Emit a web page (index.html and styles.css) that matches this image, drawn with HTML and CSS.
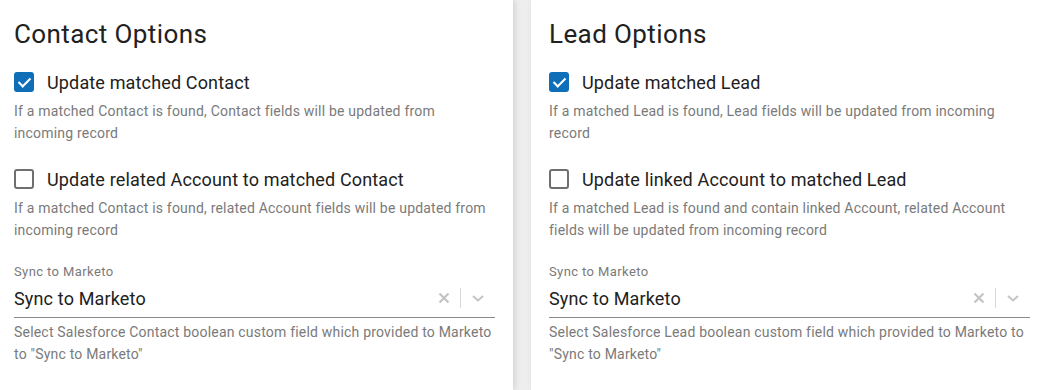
FILE: index.html
```html
<!DOCTYPE html>
<html>
<head>
    <title>Sync Options</title>
    <link rel="stylesheet" href="styles.css">
</head>
<body>
    <div class="page">
        <!-- Contact options card -->
        <div class="card card-left">
            <h2 class="card-title">Contact Options</h2>

            <div class="option">
                <label class="check-row">
                    <span class="box checked"></span>
                    <span class="check-label">Update matched Contact</span>
                </label>
                <p class="hint">If a matched Contact is found, Contact fields will be updated from incoming record</p>
            </div>

            <div class="option">
                <label class="check-row">
                    <span class="box"></span>
                    <span class="check-label">Update related Account to matched Contact</span>
                </label>
                <p class="hint">If a matched Contact is found, related Account fields will be updated from incoming record</p>
            </div>

            <div class="field">
                <div class="field-label">Sync to Marketo</div>
                <div class="select">
                    <span class="select-value">Sync to Marketo</span>
                    <span class="select-icons">
                        <svg class="icon-clear" width="12" height="12" viewBox="0 0 12 12"><path d="M1.5 1.5 L10.5 10.5 M10.5 1.5 L1.5 10.5" stroke="#c4c4c4" stroke-width="2.2"/></svg>
                        <span class="sep"></span>
                        <svg class="icon-chevron" width="14" height="10" viewBox="0 0 14 10"><path d="M2 3 L7 7.5 L12 3" fill="none" stroke="#c4c4c4" stroke-width="2"/></svg>
                    </span>
                </div>
                <p class="hint">Select Salesforce Contact boolean custom field which provided to Marketo to "Sync to Marketo"</p>
            </div>
        </div>

        <!-- Lead options card -->
        <div class="card card-right">
            <h2 class="card-title">Lead Options</h2>

            <div class="option">
                <label class="check-row">
                    <span class="box checked"></span>
                    <span class="check-label">Update matched Lead</span>
                </label>
                <p class="hint">If a matched Lead is found, Lead fields will be updated from incoming record</p>
            </div>

            <div class="option">
                <label class="check-row">
                    <span class="box"></span>
                    <span class="check-label">Update linked Account to matched Lead</span>
                </label>
                <p class="hint">If a matched Lead is found and contain linked Account, related Account fields will be updated from incoming record</p>
            </div>

            <div class="field">
                <div class="field-label">Sync to Marketo</div>
                <div class="select">
                    <span class="select-value">Sync to Marketo</span>
                    <span class="select-icons">
                        <svg class="icon-clear" width="12" height="12" viewBox="0 0 12 12"><path d="M1.5 1.5 L10.5 10.5 M10.5 1.5 L1.5 10.5" stroke="#c4c4c4" stroke-width="2.2"/></svg>
                        <span class="sep"></span>
                        <svg class="icon-chevron" width="14" height="10" viewBox="0 0 14 10"><path d="M2 3 L7 7.5 L12 3" fill="none" stroke="#c4c4c4" stroke-width="2"/></svg>
                    </span>
                </div>
                <p class="hint">Select Salesforce Lead boolean custom field which provided to Marketo to "Sync to Marketo"</p>
            </div>
        </div>
    </div>
</body>
</html>
```

FILE: styles.css
```css
body {
    margin: 0;
    padding: 0;
    background-color: #eeeeee;
    font-family: Roboto, 'Liberation Sans', sans-serif;
    color: #212121;
    overflow: hidden;
}

.page {
    display: flex;
    gap: 18px;
    height: 390px;
}

.card {
    background-color: #fff;
    box-sizing: border-box;
    width: 513px;
    flex-shrink: 0;
    padding-top: 18px;
    box-shadow: 2px 0 6px rgba(0, 0, 0, 0.12);
}

.card-left {
    padding-left: 14px;
    padding-right: 18px;
}

.card-right {
    padding-left: 18px;
    padding-right: 18px;
    width: 517px;
}

.card-title {
    margin: 0 0 20px 0;
    font-size: 26px;
    font-weight: 400;
    letter-spacing: 0.4px;
    line-height: 32px;
    color: #212121;
}

.option {
    margin-bottom: 23px;
}

.check-row {
    display: flex;
    align-items: center;
    gap: 13px;
    height: 24px;
}

/* checkbox square */
.box {
    width: 16px;
    height: 16px;
    border: 2px solid #6f6f6f;
    border-radius: 3px;
    flex-shrink: 0;
    position: relative;
}

.box.checked {
    background-color: #0e6eb8;
    border-color: #0e6eb8;
}

/* the tick */
.box.checked::after {
    content: '';
    position: absolute;
    left: 5px;
    top: 1px;
    width: 5px;
    height: 10px;
    border: solid #fff;
    border-width: 0 2px 2px 0;
    transform: rotate(45deg);
}

.check-label {
    font-size: 18px;
    letter-spacing: 0.15px;
    color: #212121;
}

.hint {
    margin: 6px 0 0 0;
    font-size: 14px;
    letter-spacing: 0.2px;
    line-height: 22px;
    color: #7a7a7a;
}

.field {
    margin-top: 23px;
}

.field-label {
    font-size: 13px;
    letter-spacing: 0.4px;
    line-height: 16px;
    color: #7a7a7a;
}

.select {
    display: flex;
    align-items: center;
    justify-content: space-between;
    height: 35px;
    border-bottom: 1px solid #8a8a8a;
    margin-top: 2px;
}

.select-value {
    font-size: 18px;
    letter-spacing: 0.15px;
    color: #212121;
    margin-top: -3px;
}

.select-icons {
    display: flex;
    align-items: center;
    gap: 10px;
    padding-right: 10px;
    margin-top: -3px;
}

.sep {
    width: 1px;
    height: 20px;
    background-color: #d8d8d8;
}

.field .hint {
    margin-top: 3px;
}
```
